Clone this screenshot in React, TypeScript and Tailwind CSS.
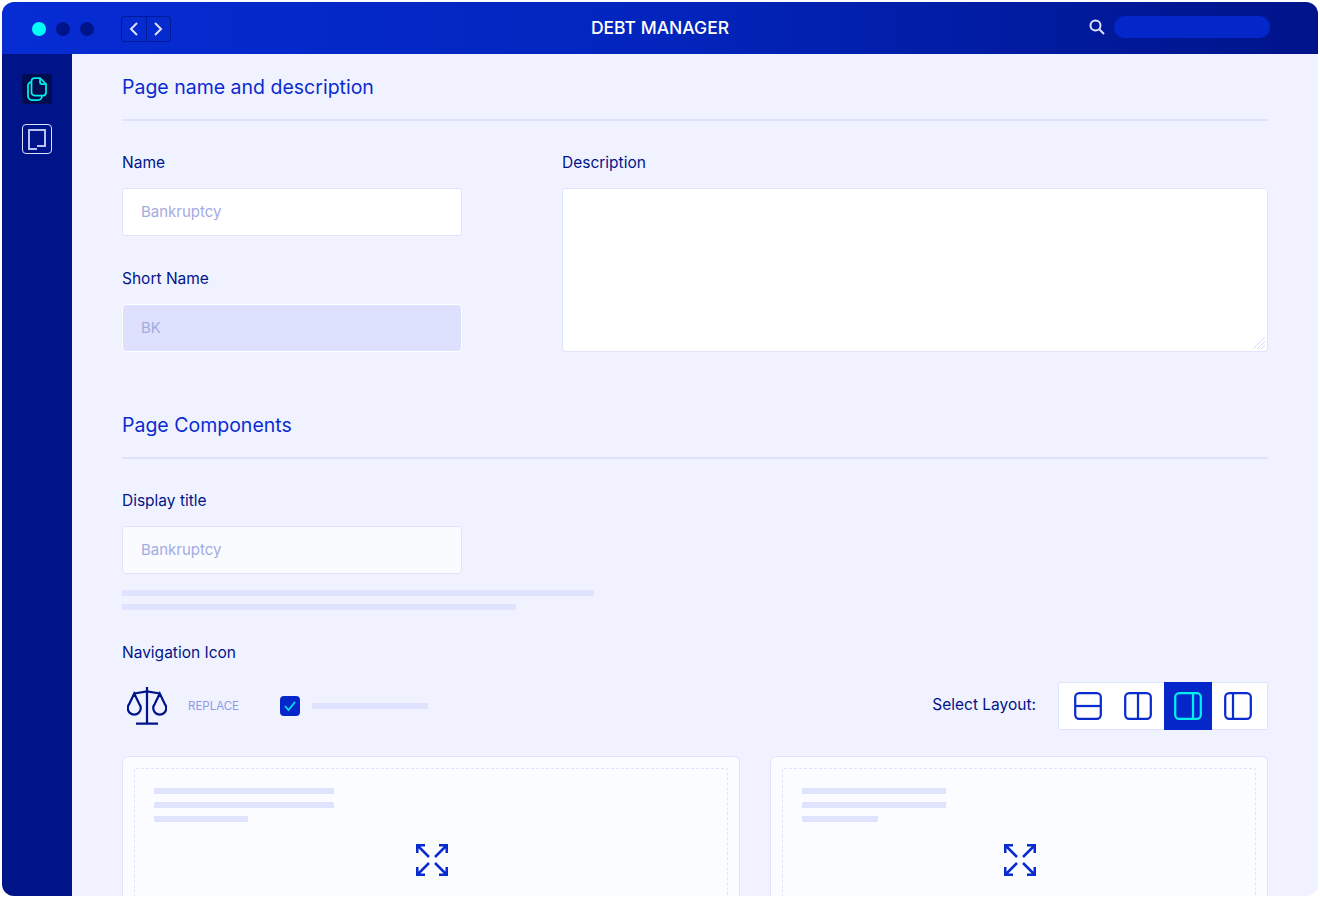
const FONT = "font-['Inter','Noto_Sans',sans-serif]";

function SkeletonBar({ width }: { width: string }) {
  return <div className={`h-[6px] bg-[#dfe3fd] ${width}`} />;
}

function FieldLabel({ children }: { children: string }) {
  return <label className="block h-[20px] text-[15.5px] leading-[22px] text-[#00148a]">{children}</label>;
}

function TextField({ value, className = "bg-white" }: { value: string; className?: string }) {
  return (
    <input
      readOnly
      placeholder={value}
      className={`block h-[48px] w-[340px] rounded-[4px] border border-[#e0e4fb] px-[18px] pb-[2px] text-[15px] outline-none placeholder:text-[#a3abe3] ${className}`}
    />
  );
}

function SectionTitle({ children }: { children: string }) {
  return (
    <div className="h-[46px] border-b-2 border-[#dfe3fa]">
      <h2 className="text-[19.5px] leading-[24px] text-[#0a2bd0]">{children}</h2>
    </div>
  );
}

function ExpandIcon() {
  return (
    <svg width="32" height="32" viewBox="0 0 32 32" fill="none" stroke="#0a2bd0" strokeWidth="2.5">
      <path d="M1.250 9V1.250H9M1.250 1.250l11.750 11.750M23 1.250h7.750V9M30.750 1.250 19 13M1.250 23v7.750H9M1.250 30.750 13 19M30.750 23v7.750H23M30.750 30.750 19 19" />
    </svg>
  );
}

function LayoutIcon({ divider, color = "#0a2bd0" }: { divider: string; color?: string }) {
  return (
    <svg width="28" height="28" viewBox="0 0 28 28" fill="none" stroke={color} strokeWidth="2.25">
      <rect x="1.200" y="1.200" width="25.600" height="25.600" rx="4" />
      <path d={divider} />
    </svg>
  );
}

function PreviewCard({ width, bar, shortBar }: { width: string; bar: string; shortBar: string }) {
  return (
    <div className={`${width} h-[160px] shrink-0 rounded-t-[6px] border border-b-0 border-[#e0e4fb] bg-[#fbfcff] px-[11px] pt-[11px]`}>
      <div className="h-[150px] rounded-t-[2px] border border-b-0 border-dashed border-[#dfe3fd] px-[19px] pt-[19px]">
        <div className="flex flex-col gap-[8px]">
          <SkeletonBar width={bar} />
          <SkeletonBar width={bar} />
          <SkeletonBar width={shortBar} />
        </div>
        <div className="mt-[22px] flex justify-center pl-[2px]">
          <ExpandIcon />
        </div>
      </div>
    </div>
  );
}

export default function App() {
  return (
    <div className={`h-[898px] w-[1320px] overflow-hidden bg-white p-[2px] ${FONT}`}>
      <div className="flex h-[894px] w-[1316px] flex-col overflow-hidden rounded-[12px]">
        {/* Title bar */}
        <header className="relative flex h-[52px] shrink-0 items-center bg-gradient-to-r from-[#062cd4] via-[#0325bd] to-[#00148a] pl-[30px] pt-[2px]">
          <div className="flex gap-[10px]">
            <span className="h-[14px] w-[14px] rounded-full bg-[#00fff7]" />
            <span className="h-[14px] w-[14px] rounded-full bg-[#00148a]" />
            <span className="h-[14px] w-[14px] rounded-full bg-[#00148a]" />
          </div>
          <div className="ml-[27px] flex h-[26px] w-[50px] rounded-[3px] border border-[#00189a]">
            <span className="flex flex-1 items-center justify-center border-r border-[#00189a]">
              <svg width="10" height="14" viewBox="0 0 10 14" fill="none" stroke="#dfe3fd" strokeWidth="2"><path d="M8 1 2 7l6 6" /></svg>
            </span>
            <span className="flex flex-1 items-center justify-center">
              <svg width="10" height="14" viewBox="0 0 10 14" fill="none" stroke="#dfe3fd" strokeWidth="2"><path d="m2 1 6 6-6 6" /></svg>
            </span>
          </div>
          <h1 className="absolute inset-x-0 mb-[2px] text-center text-[17.5px] font-medium text-white">DEBT MANAGER</h1>
          <div className="mb-[4px] ml-auto mr-[48px] flex items-center gap-[9px]">
            <svg width="16" height="16" viewBox="0 0 16 16" fill="none" stroke="#dfe3fd" strokeWidth="2">
              <circle cx="6.500" cy="6.500" r="5" />
              <path d="m10.500 10.500 4.500 4.500" />
            </svg>
            <div className="h-[22px] w-[156px] rounded-full bg-[#0526c8]" />
          </div>
        </header>

        <div className="flex min-h-0 flex-1">
          {/* Sidebar */}
          <aside className="flex w-[70px] shrink-0 flex-col items-center gap-[20px] bg-[#00148a] pt-[20px]">
            <div className="flex h-[30px] w-[30px] items-center justify-center rounded-[3px] bg-[#000c50]">
              <svg width="20" height="24" viewBox="0 0 20 24" fill="none" stroke="#00f0e6" strokeWidth="1.750">
                <path d="M7.500 1H13l6 6v8.500a3 3 0 0 1-3 3H7.500a3 3 0 0 1-3-3V4a3 3 0 0 1 3-3Z" />
                <path d="M13 1v4a2 2 0 0 0 2 2h4" />
                <path d="M4.500 5A3.500 3.500 0 0 0 1 8.500V19a4 4 0 0 0 4 4h6a4 4 0 0 0 4-4v-.500" />
              </svg>
            </div>
            <div className="flex h-[30px] w-[30px] items-center justify-center rounded-[4px] border border-[#dfe3fd]">
              <svg width="18" height="21" viewBox="0 0 18 21" fill="none" stroke="#b9c2f0" strokeWidth="2">
                <path d="M9 20H1V1h16v16H9" />
              </svg>
            </div>
          </aside>

          {/* Main */}
          <main className="min-w-0 flex-1 overflow-hidden bg-[#f0f3ff] pl-[50px] pr-[50px] pt-[21px]">
            <SectionTitle>Page name and description</SectionTitle>

            <div className="mt-[31px] flex gap-[100px]">
              <div className="w-[340px] shrink-0">
                <FieldLabel>Name</FieldLabel>
                <div className="mt-[16px]"><TextField value="Bankruptcy" /></div>
                <div className="mt-[32px]"><FieldLabel>Short Name</FieldLabel></div>
                <div className="mt-[16px]">
                  <TextField value="BK" className="border-white bg-[#dde1fd]" />
                </div>
              </div>
              <div className="flex-1">
                <FieldLabel>Description</FieldLabel>
                <div className="relative mt-[16px]">
                  <textarea readOnly className="block h-[164px] w-full resize-none rounded-[4px] border border-[#e0e4fb] bg-white outline-none" />
                  <svg className="absolute bottom-[3px] right-[3px]" width="13" height="13" viewBox="0 0 13 13" stroke="#d5daf8" strokeWidth="1">
                    <path d="M1 13 13 1M5 13l8-8M9 13l4-4" />
                  </svg>
                </div>
              </div>
            </div>

            <div className="mt-[61px]"><SectionTitle>Page Components</SectionTitle></div>

            <div className="mt-[31px]"><FieldLabel>Display title</FieldLabel></div>
            <div className="mt-[16px]"><TextField value="Bankruptcy" className="bg-[#fafbff]" /></div>
            <div className="mt-[16px] flex flex-col gap-[8px]">
              <SkeletonBar width="w-[472px]" />
              <SkeletonBar width="w-[394px]" />
            </div>

            <div className="mt-[32px]"><FieldLabel>Navigation Icon</FieldLabel></div>

            <div className="mt-[20px] flex h-[48px] items-center">
              <svg className="ml-[5px]" width="40" height="38" viewBox="0 0 40 38" fill="none" stroke="#00148a" strokeWidth="2.250">
                <path d="M20 0v36M9 36.500h22M7.250 6.500 20 4.500l12.750 2" />
                <path d="M7.250 6.500 2.250 17a6.500 6.500 0 1 0 10 0L7.250 6.500ZM32.750 6.500l-5 10.500a6.500 6.500 0 1 0 10 0l-5-10.500Z" />
              </svg>
              <span className="ml-[21px] w-[50px] pt-[1px] text-[11.5px] text-[#8d99e8]">REPLACE</span>
              <span className="ml-[42px] flex h-[20px] w-[20px] items-center justify-center rounded-[4px] bg-[#0526c8]">
                <svg width="12" height="10" viewBox="0 0 12 10" fill="none" stroke="#00e6f0" strokeWidth="1.750"><path d="m1 5 3.500 4L11 1" /></svg>
              </span>
              <div className="ml-[12px]"><SkeletonBar width="w-[116px]" /></div>
              <span className="ml-auto pb-[2px] text-[15.5px] text-[#00148a]">Select Layout:</span>
              <div className="ml-[22px] flex h-[48px] w-[210px] items-center rounded-[2px] border border-[#e0e4fb] bg-white px-[4px]">
                <span className="flex h-full w-[50px] items-center justify-center">
                  <LayoutIcon divider="M1 14h26" />
                </span>
                <span className="flex h-full w-[50px] items-center justify-center">
                  <LayoutIcon divider="M14 1v26" />
                </span>
                <span className="flex h-full w-[50px] items-center justify-center">
                  <span className="flex h-[48px] w-[48px] items-center justify-center bg-[#0526c8]">
                    <LayoutIcon divider="M19 1v26" color="#00f0f0" />
                  </span>
                </span>
                <span className="flex h-full w-[50px] items-center justify-center">
                  <LayoutIcon divider="M9 1v26" />
                </span>
              </div>
            </div>

            <div className="mt-[26px] flex gap-[30px]">
              <PreviewCard width="w-[618px]" bar="w-[180px]" shortBar="w-[94px]" />
              <PreviewCard width="w-[498px]" bar="w-[144px]" shortBar="w-[76px]" />
            </div>
          </main>
        </div>
      </div>
    </div>
  );
}
